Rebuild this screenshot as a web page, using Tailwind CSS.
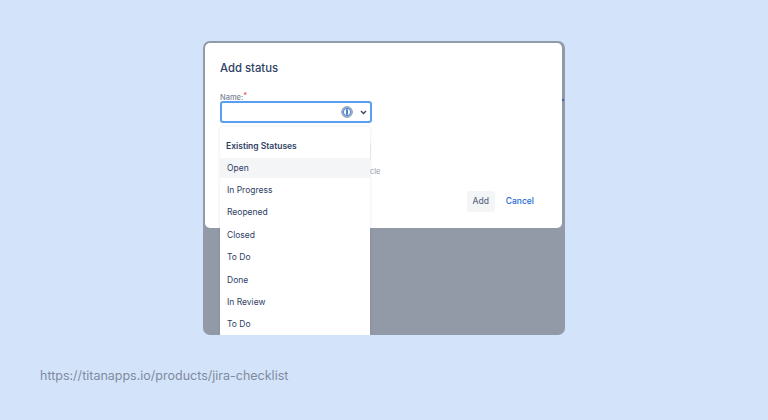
<!DOCTYPE html><html lang="en">
<head>
  <meta charset="UTF-8" />
  <title>Add status</title>
  <script src="https://cdn.jsdelivr.net/npm/@tailwindcss/browser@4"></script>
</head>
<body class="w-[768px] h-[420px] overflow-hidden bg-[#d3e3fa] font-['Inter',sans-serif]">
  <!-- screenshot frame -->
  <div class="ml-[203px] pt-[41px]">
    <div class="relative w-[362px] h-[294px] rounded-[7px] bg-[#9299a7] p-[2px] overflow-hidden">
      <!-- dialog -->
      <div class="w-[357px] h-[185px] rounded-[5px] bg-white pl-[15px] pr-[28px] pt-[17px] flex flex-col">
        <h2 class="text-[11.3px] leading-[16px] font-medium text-[#2f4163]">Add status</h2>
        <div class="mt-[17px] h-[10px] text-[7.5px] leading-[10px] font-medium text-[#7a8599]">Name:<span class="text-[#e5533a] relative -top-[2px]">*</span></div>
        <div class="mt-[-2px] w-[152px] h-[22px] rounded-[3px] border-2 border-[#5a9df5] flex items-center justify-end pr-[3px] gap-[7px]">
          <svg width="12" height="12" viewBox="0 0 12 12">
            <circle cx="6" cy="6" r="5.4" fill="#a6b4c9" stroke="#8391a6" stroke-width="0.8"/>
            <circle cx="6" cy="6" r="3.6" fill="#fff"/>
            <circle cx="6" cy="6" r="3.6" fill="none" stroke="#3f87ea" stroke-width="1"/>
            <rect x="5.2" y="3.3" width="1.6" height="5.4" fill="#2b5fae"/>
          </svg>
          <svg width="7" height="5" viewBox="0 0 7 5">
            <path d="M1 1l2.5 2.5L6 1" fill="none" stroke="#3a4963" stroke-width="1.4"/>
          </svg>
        </div>
        <div class="mt-[44px] ml-[150px] text-[7.5px] leading-[10px] text-[#939cad]">cle</div>
        <div class="mt-[14px] flex justify-end items-center gap-[11px]">
          <button class="w-[28px] h-[21px] rounded-[3px] bg-[#f4f5f7] text-[8.5px] font-medium text-[#5d6b84]">Add</button>
          <button class="text-[8.5px] font-medium text-[#2468d8]">Cancel</button>
        </div>
      </div>
      <!-- field edge peeking out behind the menu -->
      <div class="absolute left-[165px] top-[101px] w-[3px] h-[19px] rounded-r-[2px] bg-[#eef0f3]"></div>
      <!-- page behind the dialog, seen at its right edge -->
      <div class="absolute right-[1px] top-[58px] w-[2px] h-[2px] rounded-full bg-[#2a50a8]"></div>
      <!-- status menu -->
      <div class="absolute left-[17px] top-[86px] w-[150px] h-[208px] bg-white shadow-[0_0_3px_rgba(9,30,66,0.12)] rounded-t-[3px] pt-[9px]">
        <div class="px-[6px] h-[22px] text-[8.5px] leading-[20px] font-semibold text-[#2f4163]">Existing Statuses</div>
        <ul class="text-[8.5px] text-[#2f4163]">
          <li class="h-[20px] pl-[7px] leading-[20px] bg-[#f4f5f7]">Open</li>
          <li class="h-[23.4px] pl-[7px] pt-[1px] leading-[22px]">In Progress</li>
          <li class="h-[22.4px] pl-[7px] leading-[22px]">Reopened</li>
          <li class="h-[22.4px] pl-[7px] leading-[22px]">Closed</li>
          <li class="h-[22.4px] pl-[7px] leading-[22px]">To Do</li>
          <li class="h-[22.4px] pl-[7px] leading-[22px]">Done</li>
          <li class="h-[22.4px] pl-[7px] leading-[22px]">In Review</li>
          <li class="h-[22.4px] pl-[7px] leading-[22px]">To Do</li>
        </ul>
      </div>
    </div>
  </div>
  <p class="mt-[32px] ml-[40px] text-[12.5px] leading-[18px] text-[#808b9e] font-['Inter',sans-serif]">https://titanapps.io/products/jira-checklist</p>
</body>
</html>
